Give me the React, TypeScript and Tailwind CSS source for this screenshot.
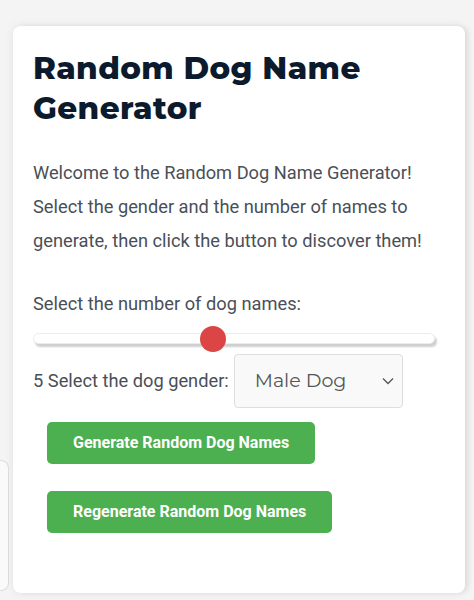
import React, { useState } from 'react';

const maleNames = ['Max', 'Buddy', 'Charlie', 'Rocky', 'Duke', 'Bear', 'Tucker', 'Zeus', 'Milo', 'Cooper'];
const femaleNames = ['Bella', 'Luna', 'Daisy', 'Lucy', 'Molly', 'Sadie', 'Rosie', 'Coco', 'Ruby', 'Lola'];

function pickNames(gender: string, count: number) {
  const pool = gender === 'female' ? femaleNames : maleNames;
  return [...pool].sort(() => Math.random() - 0.5).slice(0, count);
}

function App() {
  const [count, setCount] = useState(5);
  const [gender, setGender] = useState('male');
  const [names, setNames] = useState<string[]>([]);

  // thumb position on the 1..10 range
  const percent = ((count - 1) / 9) * 100;

  return (
    <div className="relative min-h-screen bg-[#f4f4f4] pt-[26px] pl-[13px] pr-[9px] pb-[7px]">
      {/* edge of the panel sitting behind the card */}
      <div className="absolute left-0 top-[460px] h-[131px] w-[9px] rounded-r-lg border border-l-0 border-[#dcdcdc] bg-[#fafafa]"></div>

      <div className="min-h-[567px] rounded-lg bg-white px-5 pt-[22px] pb-[58px] shadow-[0_0_10px_rgba(0,0,0,0.08),4px_0_4px_rgba(0,0,0,0.05)]">
        <h1 className="font-['Montserrat','Open_Sans',sans-serif] text-[31px] font-extrabold leading-[40px] tracking-[0.4px] text-[#0b1a2c]">
          Random Dog Name Generator
        </h1>

        <p className="mt-[28px] font-['Roboto',sans-serif] text-[18.25px] leading-[34px] text-[#4a4f57]">
          Welcome to the Random Dog Name Generator! Select the gender and the number of names to generate, then click the button to discover them!
        </p>

        <label className="mt-[34px] block font-['Roboto',sans-serif] text-[18.25px] leading-[24px] text-[#4a4f57]">
          Select the number of dog names:
        </label>

        {/* range slider */}
        <div className="relative mt-[10px] h-[26px] w-[402px]">
          <div className="absolute left-0 right-0 top-[7px] h-[11px] rounded-full border border-[#ececec] bg-white shadow-[2px_3px_2px_#cfcfcf]"></div>
          <div
            className="absolute top-0 h-[26px] w-[26px] -translate-x-1/2 rounded-full bg-[#dc4545]"
            style={{ left: `calc(13px + (100% - 26px) * ${percent / 100})` }}
          ></div>
          <input
            type="range"
            min={1}
            max={10}
            value={count}
            onChange={(e) => setCount(Number(e.target.value))}
            className="absolute inset-0 h-full w-full cursor-pointer opacity-0"
          />
        </div>

        <div className="mt-[2px] flex items-center font-['Roboto',sans-serif] text-[18.25px] text-[#4a4f57]">
          <span>{count} Select the dog gender:</span>
          <div className="relative ml-[5px]">
            <select
              value={gender}
              onChange={(e) => setGender(e.target.value)}
              className="h-[54px] w-[169px] appearance-none rounded-sm border border-[#dedede] bg-[#f9f9f9] pl-[20px] font-['Montserrat','Open_Sans',sans-serif] text-[19px] text-[#555] outline-none"
            >
              <option value="male">Male Dog</option>
              <option value="female">Female Dog</option>
            </select>
            <svg
              className="pointer-events-none absolute right-[9px] top-[23px] h-[8px] w-[12px] text-[#555]"
              viewBox="0 0 12 8"
              fill="none"
              stroke="currentColor"
              strokeWidth="1.3"
            >
              <path d="M1 1.5l5 5 5-5" />
            </svg>
          </div>
        </div>

        <div className="mt-[14px] flex flex-col items-start gap-[27px] pl-[14px] font-['Roboto',sans-serif]">
          <button
            onClick={() => setNames(pickNames(gender, count))}
            className="h-[42px] rounded-[5px] bg-[#4caf50] px-[26px] text-[16px] font-bold text-white"
          >
            Generate Random Dog Names
          </button>
          <button
            onClick={() => setNames(pickNames(gender, count))}
            className="h-[42px] rounded-[5px] bg-[#4caf50] px-[26px] text-[16px] font-bold text-white"
          >
            Regenerate Random Dog Names
          </button>
        </div>

        {names.length > 0 && (
          <ul className="mt-4 font-['Roboto',sans-serif] text-[18px] text-[#4a4f57]">
            {names.map((n) => (
              <li key={n}>{n}</li>
            ))}
          </ul>
        )}
      </div>
    </div>
  );
}

export default App;
